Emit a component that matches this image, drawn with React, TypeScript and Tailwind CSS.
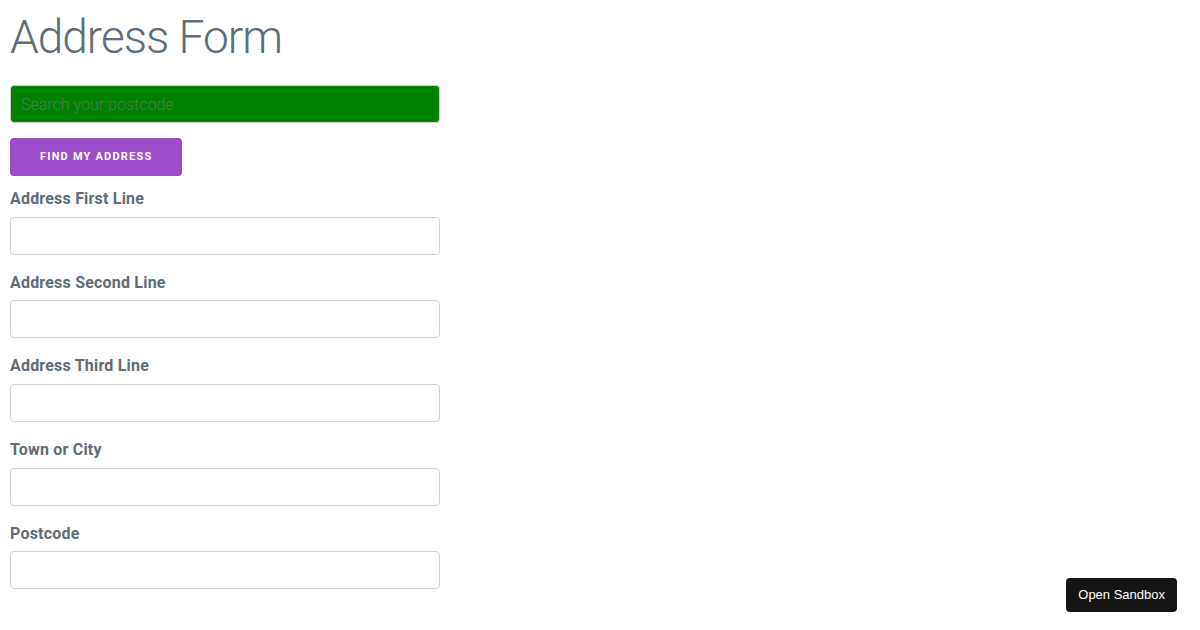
import React from 'react';

const fields = ['Address First Line', 'Address Second Line', 'Address Third Line', 'Town or City', 'Postcode'];

const App = () => {
  return (
    <div className="min-h-[630px] bg-white font-['Roboto',sans-serif] text-[#606c76] font-light">
      <div className="w-[430px] ml-[10px] pt-[10px]">
        <h1 className="text-[46px] leading-[1.2] tracking-[-1px] font-light mb-[20px]">Address Form</h1>
        <input
          type="text"
          placeholder="Search your postcode"
          className="block w-full h-[38px] px-[10px] py-[6px] mb-[15px] bg-[#008000] border border-[#d1d1d1] rounded-[4px] text-[16px] font-light placeholder:text-[#557a5a] outline-none"
        />
        <button className="block h-[38px] px-[30px] mb-[10px] bg-[#9b4dca] rounded-[4px] text-white text-[11px] font-bold uppercase tracking-[1.2px]">
          Find my address
        </button>
        {fields.map((f) => (
          <div key={f}>
            <label className="block text-[16px] leading-[25.6px] font-bold tracking-[0.2px] mb-[5px]">{f}</label>
            <input
              type="text"
              className="block w-full h-[38px] px-[10px] py-[6px] mb-[15px] bg-transparent border border-[#d1d1d1] rounded-[4px] text-[16px] outline-none"
            />
          </div>
        ))}
      </div>
      <button className="fixed right-[23px] bottom-[18px] h-[34px] px-[12px] bg-[#151515] rounded-[4px] text-white text-[13px] font-normal font-['Liberation_Sans',sans-serif]">
        Open Sandbox
      </button>
    </div>
  );
};

export default App;
